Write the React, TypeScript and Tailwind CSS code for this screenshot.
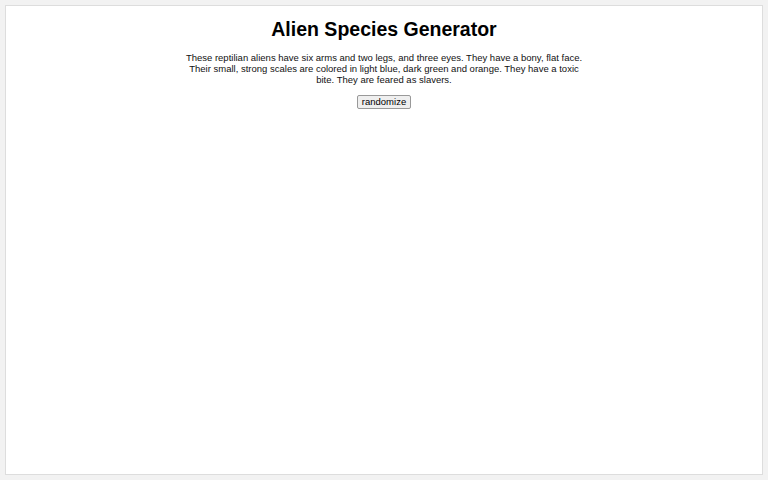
import { useState } from "react"

const bodies = [
  "These reptilian aliens have six arms and two legs, and three eyes. They have a bony, flat face. Their small, strong scales are colored in light blue, dark green and orange. They have a toxic bite. They are feared as slavers.",
  "These insectoid aliens have four arms and four legs, and two eyes. They have a long, narrow face. Their thick, shiny shells are colored in black, red and yellow. They can spit acid. They are known as traders.",
]

export default function App() {
  const [idx, setIdx] = useState(0)

  return (
    <div className="min-h-screen bg-[#f2f2f2] p-[5px]" style={{ fontFamily: '"Liberation Sans", Arial, sans-serif' }}>
      <div className="h-[470px] bg-white border border-[#dddddd] flex flex-col items-center">
        <h1 className="mt-[10px] text-[19.5px] leading-[26px] font-bold text-black">Alien Species Generator</h1>
        <p className="mt-[10px] w-[404px] text-center text-[9.5px] leading-[11px] text-[#111]">{bodies[idx]}</p>
        <button
          onClick={() => setIdx((idx + 1) % bodies.length)}
          className="mt-[10px] px-[4px] h-[14px] text-[9.5px] leading-[12px] text-black bg-[#efefef] border border-[#999999] rounded-[2px]"
        >
          randomize
        </button>
      </div>
    </div>
  )
}
